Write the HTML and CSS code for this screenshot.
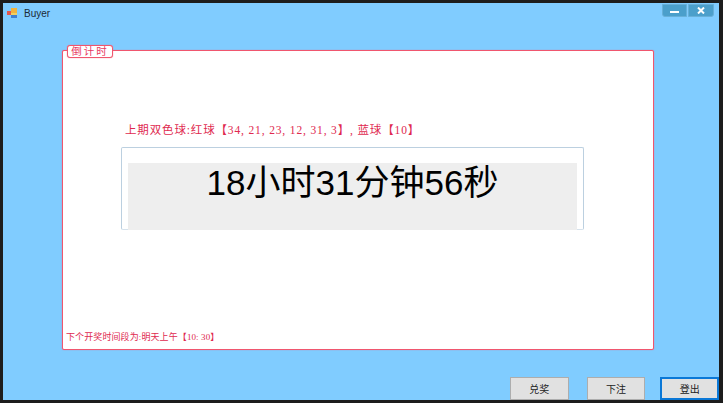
FILE: index.html
```html
<!DOCTYPE html>
<html lang="zh">
<head>
<meta charset="utf-8">
<title>Buyer</title>
<link rel="stylesheet" href="styles.css">
</head>
<body>
<div class="window">
  <header class="titlebar">
    <div class="title">
      <svg class="app-icon" width="11" height="11" viewBox="0 0 11 11">
        <rect x="0" y="3" width="5" height="4" fill="#e2574c"/>
        <rect x="4" y="0" width="6" height="5" fill="#f2b33d"/>
        <rect x="4" y="5" width="6" height="2" fill="#f0d060"/>
        <rect x="4" y="7" width="6" height="3" fill="#3f7fd0"/>
      </svg>
      <span>Buyer</span>
    </div>
    <div class="controls">
      <div class="ctl ctl-min"><span class="dash"></span></div>
      <div class="ctl ctl-close">
        <svg width="8" height="7" viewBox="0 0 8 7"><path d="M1 .5 7 6.5M7 .5 1 6.5" stroke="#fff" stroke-width="2"/></svg>
      </div>
    </div>
  </header>
  <main class="panel">
    <div class="legend">倒计时</div>
    <p class="last">上期双色球:红球【34, 21, 23, 12, 31, 3】, 蓝球【10】</p>
    <div class="box"><div class="count">18小时31分钟56秒</div></div>
    <p class="next">下个开奖时间段为:明天上午【10: 30】</p>
  </main>
  <footer class="actions">
    <button class="btn">兑奖</button>
    <button class="btn">下注</button>
    <button class="btn btn-active">登出</button>
  </footer>
</div>
</body>
</html>
```
FILE: styles.css
```css
* { box-sizing: border-box; }
html, body { margin: 0; height: 100%; }
body {
  width: 723px;
  height: 403px;
  overflow: hidden;
  background: #1d1d1d;
  padding: 3px 4px 3px 3px;
  font-family: "Liberation Sans", "Noto Sans CJK SC", sans-serif;
}
.window {
  height: 397px;
  background: #80ccff;
  display: flex;
  flex-direction: column;
  padding-left: 59px;
}
.titlebar {
  height: 47px;
  margin-left: -59px;
  padding-left: 4px;
  display: flex;
  justify-content: space-between;
  align-items: flex-start;
}
.title {
  display: flex;
  align-items: center;
  gap: 6px;
  height: 20px;
  font-size: 10px;
  color: #1c2a36;
}
.app-icon { margin-top: 1px; }
.controls { display: flex; gap: 1px; margin-right: 5px; margin-top: 1px; }
.ctl {
  height: 13px;
  background: #4b9fcb;
  border: 1px solid #67afd8;
  display: flex;
  align-items: center;
  justify-content: center;
}
.ctl-min { width: 25px; border-radius: 0 0 0 3px; }
.ctl-close { width: 26px; border-radius: 0 0 3px 0; }
.dash { width: 9px; height: 2px; margin-top: 3px; background: #fff; }
.panel {
  position: relative;
  width: 592px;
  height: 301px;
  background: #fff;
  border: 1px solid #f0566e;
  box-shadow: 0 0 1px #f0566e;
  border-radius: 2px;
  display: flex;
  flex-direction: column;
}
.legend {
  position: absolute;
  left: 4px;
  top: -6px;
  width: 46px;
  height: 13px;
  border: 1px solid #f0566e;
  box-shadow: 0 0 1px #f0566e;
  border-radius: 3px;
  background: #fff;
  color: #e83a62;
  font-size: 10.5px;
  line-height: 11px;
  text-align: center;
  letter-spacing: 2px;
}
.last {
  margin: 72px 0 0 62px;
  height: 14px;
  font-family: "Liberation Serif", "Noto Sans CJK SC", serif;
  font-size: 11.5px;
  line-height: 14px;
  letter-spacing: 0.85px;
  color: #e0294f;
  white-space: nowrap;
}
.box {
  margin: 10px 0 0 58px;
  width: 463px;
  height: 83px;
  border: 1px solid #bcd0e0;
  border-bottom-color: #d6e2ec;
  border-radius: 2px;
  padding: 14px 6px 0;
  background: #fff;
}
.count {
  height: 67px;
  margin-top: 1px;
  background: #eeeeee;
  color: #000;
  font-size: 35px;
  line-height: 40px;
  text-align: center;
}
.next {
  margin: auto 0 6px 3px;
  font-family: "Liberation Serif", "Noto Sans CJK SC", serif;
  font-size: 9px;
  line-height: 12px;
  letter-spacing: 0.1px;
  color: #e0294f;
  white-space: nowrap;
}
.actions {
  margin: 27px 0 0 448px;
  display: flex;
  gap: 18px;
}
.btn {
  width: 59px;
  height: 23px;
  padding: 0;
  background: #e1e1e1;
  border: 1px solid #adadad;
  color: #222;
  font-family: "Noto Sans CJK SC", sans-serif;
  font-size: 10px;
}
.btn-active { margin-left: -3px; border: 2px solid #0a78d7; }
```
